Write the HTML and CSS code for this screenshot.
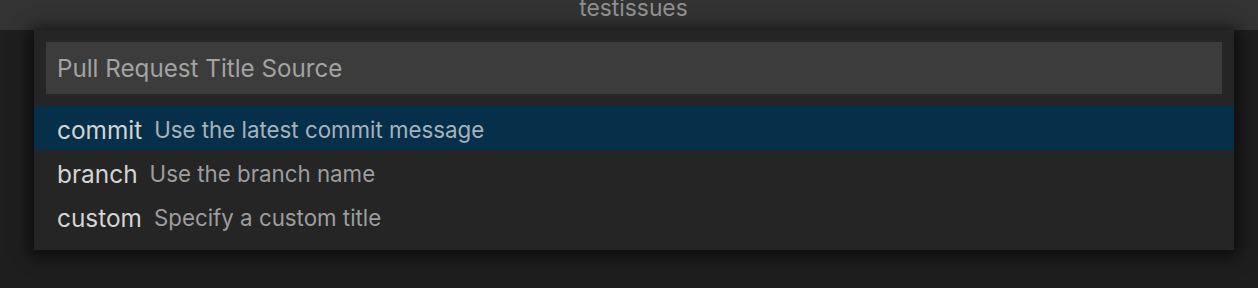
FILE: index.html
```html
<!DOCTYPE html>
<html>
<head>
<meta charset="utf-8">
<link rel="stylesheet" href="styles.css">
</head>
<body>
<div class="titlebar"><span class="title">testissues</span></div>
<div class="workbench">
  <div class="quick-input">
    <div class="input-box"><span class="placeholder">Pull Request Title Source</span></div>
    <div class="list">
      <div class="row selected"><span class="label">commit</span><span class="desc">Use the latest commit message</span></div>
      <div class="row"><span class="label">branch</span><span class="desc">Use the branch name</span></div>
      <div class="row"><span class="label">custom</span><span class="desc">Specify a custom title</span></div>
    </div>
  </div>
</div>
</body>
</html>
```
FILE: styles.css
```css
html, body {
  margin: 0;
  padding: 0;
  width: 1258px;
  height: 288px;
  overflow: hidden;
  background: #1e1e1e;
  font-family: Inter, "Liberation Sans", sans-serif;
}
.titlebar {
  height: 30px;
  background: #333333;
  display: flex;
  justify-content: center;
  align-items: flex-end;
  overflow: hidden;
}
.title {
  color: #8f8f8f;
  font-size: 22.8px;
  line-height: 22px;
  margin-bottom: 11px;
  margin-left: 9px;
}
.workbench {
  padding: 0 24px 0 34px;
}
.quick-input {
  width: 1200px;
  background: #252526;
  box-shadow: 0 2px 16px 4px rgba(0,0,0,0.65);
  padding: 12px 0 12px 0;
}
.input-box {
  margin: 0 12px;
  height: 52px;
  background: #3c3c3c;
  display: flex;
  align-items: center;
  padding-left: 11px;
}
.placeholder {
  color: #a3a3a3;
  font-size: 24.2px;
}
.list {
  margin-top: 12px;
}
.row {
  height: 44px;
  box-sizing: border-box;
  padding-top: 3px;
  display: flex;
  align-items: center;
  padding-left: 23px;
  font-size: 24.4px;
}
.row.selected {
  background: #062f4a;
}
.label {
  color: #d4d4d4;
}
.desc {
  color: #9d9d9d;
  font-size: 22.3px;
  margin-left: 12px;
}
.selected .desc {
  color: #a5b3bd;
}
```
